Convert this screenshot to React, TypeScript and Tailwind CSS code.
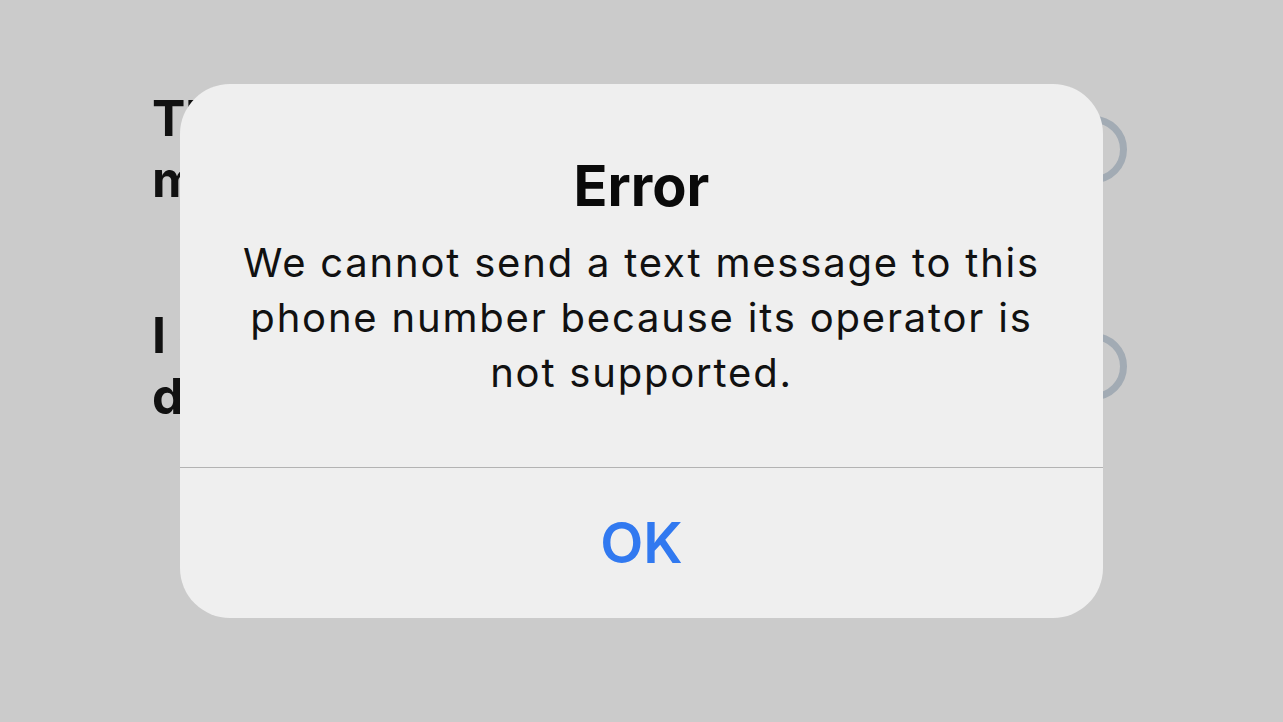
import React from 'react';

const rows = [
    { id: 'mine', first: 'This phone number is', second: 'mine and I can use it' },
    { id: 'device', first: 'I don’t have this phone', second: 'device with me now' },
];

const Radio = () => (
    <div className="w-[67px] h-[67px] shrink-0 rounded-full border-[7px] border-[#a2abb4]" />
);

export default function App() {
    return (
        <div className="relative w-full h-[722px] overflow-hidden bg-[#cbcbcb]" style={{ fontFamily: 'Inter, "Noto Sans", "Liberation Sans", sans-serif' }}>
            <div className="flex flex-col gap-[95px] pt-[88px] pl-[152px] pr-[156px]">
                {rows.map((row) => (
                    <div key={row.id} className="flex items-center justify-between gap-8">
                        <div className="text-[50px] leading-[61px] font-bold text-[#111] whitespace-nowrap">
                            {row.first}<br />
                            {row.second}
                        </div>
                        <Radio />
                    </div>
                ))}
            </div>

            <div className="absolute inset-0 flex justify-center items-start pt-[84px]">
                <div className="w-[923px] h-[534px] flex flex-col rounded-[50px] bg-[#efefef] overflow-hidden">
                    <div className="flex flex-col items-center text-center pt-[70px] pb-[67px] px-6 border-b-[1.5px] border-[#b3b3b3]">
                        <div className="text-[56px] leading-[64px] font-bold text-[#0a0a0a]">Error</div>
                        <div className="mt-[17px] text-[40px] leading-[55px] tracking-[0.045em] text-[#111]">
                            We cannot send a text message to this<br />
                            phone number because its operator is<br />
                            not supported.
                        </div>
                    </div>
                    <button className="flex-1 flex items-center justify-center text-[56px] font-semibold text-[#3179f0]">
                        OK
                    </button>
                </div>
            </div>
        </div>
    );
}
